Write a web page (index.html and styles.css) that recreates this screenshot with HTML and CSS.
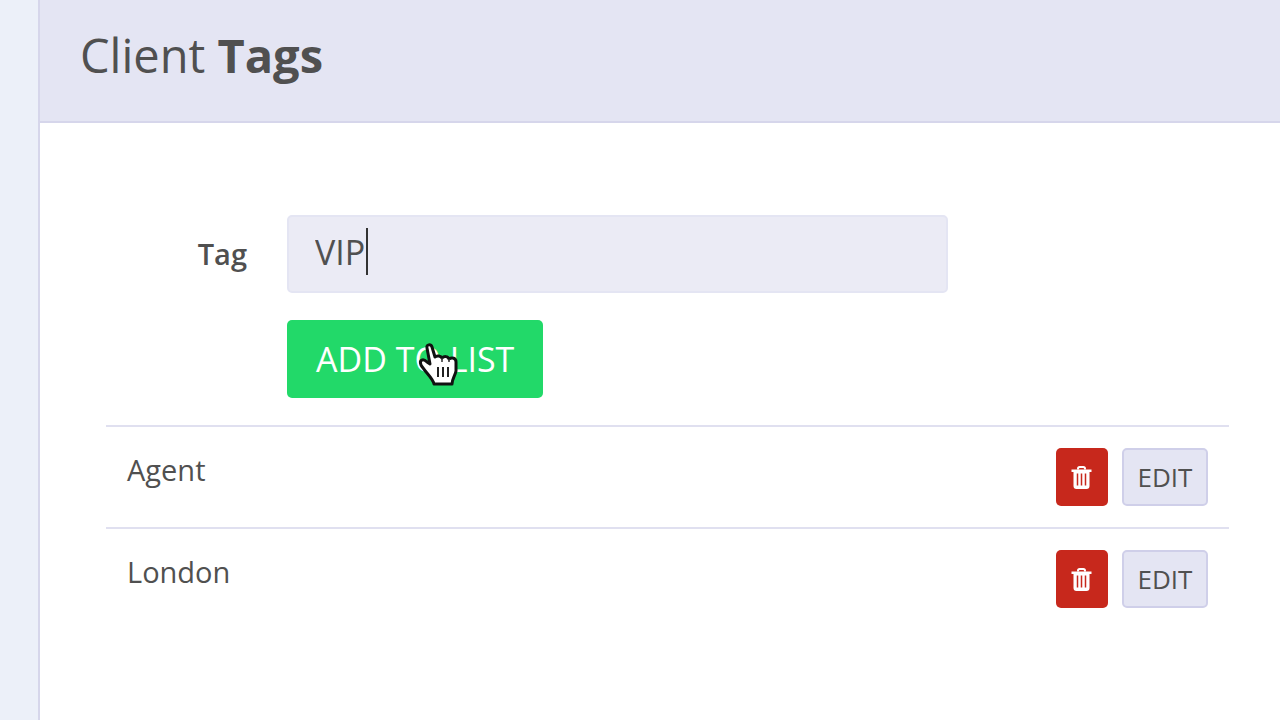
FILE: index.html
```html
<!DOCTYPE html>
<html lang="en">
<head>
<meta charset="utf-8">
<meta name="viewport" content="width=device-width, initial-scale=1">
<title>Client Tags</title>
<link rel="stylesheet" href="styles.css">
</head>
<body>
<svg class="symbols" aria-hidden="true">
  <symbol id="trash" viewBox="0 0 22 24">
    <path d="M7 4.500V3.700Q7 2 8.700 2H12.300Q14 2 14 3.700V4.500" fill="none" stroke="currentColor" stroke-width="2"/>
    <path d="M.500 4.500H20.500V7H18.500V21Q18.500 24 15.500 24H5.500Q2.500 24 2.500 21V7H.500Z" fill="currentColor"/>
    <path d="M6.500 8.500V20.500M10.500 8.500V20.500M14.500 8.500V20.500" fill="none" stroke="#c7281c" stroke-width="1.500"/>
  </symbol>
</svg>
<main class="panel">
  <header class="panel-header">
    <h1 class="title">Client <strong>Tags</strong></h1>
  </header>
  <div class="panel-body">
    <form class="tag-form">
      <label class="label" for="tag">Tag</label>
      <div class="field">
        <input class="input" id="tag" type="text" value="VIP">
        <span class="caret"></span>
      </div>
      <div class="action">
        <button class="add" type="button">ADD TO LIST</button>
        <svg class="pointer" viewBox="0 0 44 46" aria-hidden="true">
          <path d="M11 6C10 2 15 2 16 5L19 15C21 13 25 14 26 16C28 14 32 14 33 17C36 15 40 16 40 20V29C39 34 36 37 36 42H18C17 36 9 30 5 23C3 18 7 16 11 20L14 22Z" fill="#fff" stroke="#111" stroke-width="3" stroke-linejoin="round"/>
          <path d="M26 16V20M33 17V20" fill="none" stroke="#333" stroke-width="1.500"/>
          <path d="M22 25V35M27 25V35M32 25V35" fill="none" stroke="#222" stroke-width="2"/>
        </svg>
      </div>
    </form>
    <table class="tags">
      <tbody>
        <tr>
          <td class="name">Agent</td>
          <td class="tools">
            <div class="buttons">
              <button class="delete" type="button" aria-label="Delete Agent"><svg class="trash"><use href="#trash"/></svg></button>
              <button class="edit" type="button">EDIT</button>
            </div>
          </td>
        </tr>
        <tr>
          <td class="name">London</td>
          <td class="tools">
            <div class="buttons">
              <button class="delete" type="button" aria-label="Delete London"><svg class="trash"><use href="#trash"/></svg></button>
              <button class="edit" type="button">EDIT</button>
            </div>
          </td>
        </tr>
      </tbody>
    </table>
  </div>
</main>
</body>
</html>
```
FILE: styles.css
```css
* {
  box-sizing: border-box;
}

body {
  margin: 0;
  padding-left: 38px;
  background: #ecf0f9;
  color: #505050;
  font-family: "Open Sans", "Noto Sans", sans-serif;
  font-size: 29px;
  line-height: 44px;
}

button,
input {
  margin: 0;
  font-family: inherit;
  color: inherit;
}

.symbols {
  display: none;
}

.panel {
  min-height: 100vh;
  background: #fff;
  border-left: 2px solid #d6d6eb;
}

.panel-header {
  padding: 23px 40px 34px;
  background: #e4e5f3;
  border-bottom: 2px solid #d6d6eb;
}

.title {
  margin: 0;
  font-size: 47px;
  line-height: 64px;
  font-weight: 400;
}

.title strong {
  font-weight: 700;
}

.panel-body {
  padding: 92px 51px 40px 66px;
}

.tag-form {
  display: grid;
  grid-template-columns: 141px minmax(0, 661px);
  column-gap: 40px;
  row-gap: 27px;
  align-items: center;
}

.label {
  text-align: right;
  font-weight: 600;
}

.field,
.action {
  position: relative;
}

.field {
  display: flex;
}

.input {
  width: 100%;
  height: 78px;
  padding: 0 26px 4px;
  border: 2px solid #e4e5f3;
  border-radius: 5px;
  outline: none;
  background: #ebebf5;
  font-size: 34px;
}

.caret {
  position: absolute;
  left: 79px;
  top: 13px;
  width: 2px;
  height: 47px;
  background: #333;
}

.action {
  grid-column: 2;
  display: flex;
}

.add {
  height: 78px;
  padding: 0 29px;
  border: 0;
  border-radius: 5px;
  background: #22d969;
  color: #fff;
  font-size: 34px;
  font-weight: 400;
}

.pointer {
  position: absolute;
  left: 129px;
  top: 22px;
  width: 44px;
  height: 46px;
}

.tags {
  width: 100%;
  margin-top: 27px;
  border-collapse: separate;
  border-spacing: 0;
}

.tags td {
  padding: 21px;
  border-top: 2px solid #e0e0f0;
  vertical-align: top;
}

.buttons {
  display: flex;
  justify-content: flex-end;
  gap: 14px;
}

.delete,
.edit {
  display: flex;
  align-items: center;
  justify-content: center;
  height: 58px;
  border-radius: 5px;
}

.delete {
  width: 52px;
  padding: 0;
  border: 0;
  background: #c7281c;
  color: #fff;
}

.trash {
  width: 22px;
  height: 24px;
}

.edit {
  width: 86px;
  padding: 0;
  border: 2px solid #cfcfe9;
  background: #e4e5f3;
  font-size: 26px;
}
```
